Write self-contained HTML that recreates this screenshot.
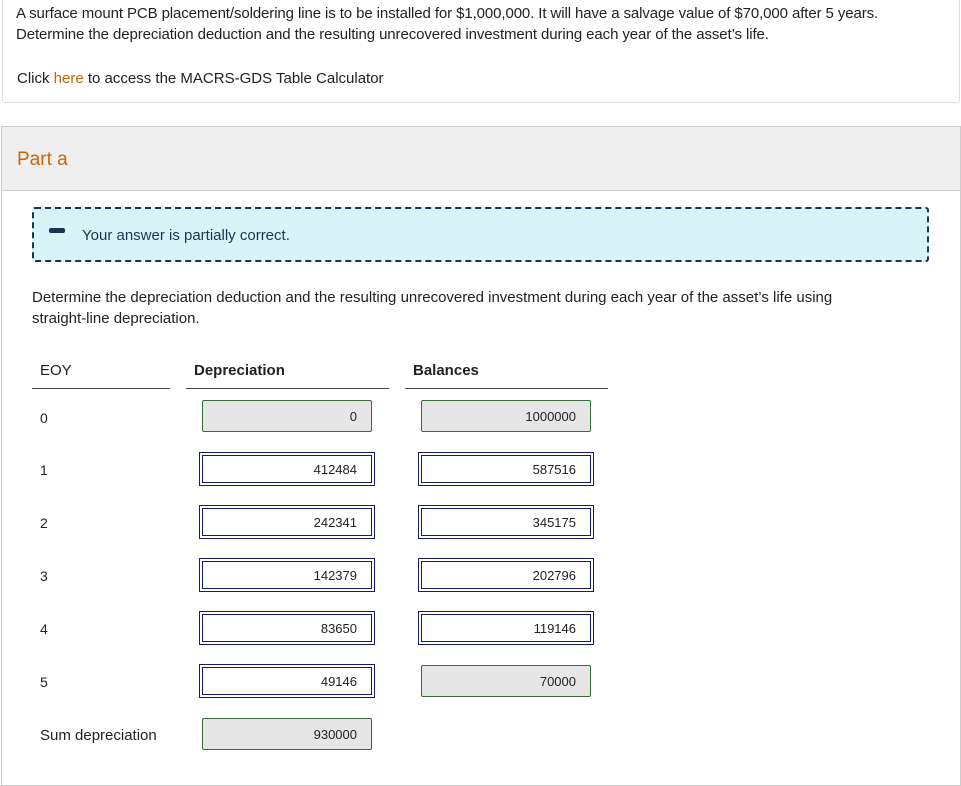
<!DOCTYPE html>
<html><head><style>
*{box-sizing:border-box;margin:0;padding:0}
body{width:961px;height:768px;background:#fff;font-family:"Liberation Sans",sans-serif;color:#222;position:relative;overflow:hidden}
.a{position:absolute}
.t{font-size:15px;line-height:21px}
.g{position:absolute;width:170px;height:32px;background:#e6e6e6;border:1px solid #3a6a3a;border-radius:2px;font-size:13px;text-align:right;padding-right:14px;line-height:32px}
.d{position:absolute;width:176px;height:34px;border:1px solid #1a1a6a;padding:2px}
.d div{border:1px solid #1a1a6a;height:100%;font-size:13px;text-align:right;padding-right:14px;line-height:28px}
.n{position:absolute;left:40px;font-size:14px}
</style></head><body>
<div class="a" style="left:2px;top:-2px;width:958px;height:105px;border:1px solid #ddd;border-top:none;border-radius:0 0 3px 3px"></div>
<div class="a t" style="left:16px;top:3px;width:910px;letter-spacing:-0.1px">A surface mount PCB placement/soldering line is to be installed for $1,000,000. It will have a salvage value of $70,000 after 5 years. Determine the depreciation deduction and the resulting unrecovered investment during each year of the asset’s life.</div>
<div class="a t" style="left:17px;top:68px">Click <span style="color:#c8650a">here</span> to access the MACRS-GDS Table Calculator</div>
<div class="a" style="left:1px;top:126px;width:960px;height:660px;border:1px solid #ccc"></div>
<div class="a" style="left:2px;top:127px;width:958px;height:64px;background:#efefef;border-bottom:1px solid #ccc"></div>
<div class="a" style="left:17px;top:149px;font-size:19px;color:#c8650a">Part a</div>
<div class="a" style="left:32px;top:207px;width:897px;height:55px;background:#d8f4f8;border:2px dashed #1a3550;border-radius:3px"></div>
<div class="a" style="left:49px;top:228px;width:16px;height:5px;background:#1a3550;border-radius:2px"></div>
<div class="a" style="left:82px;top:227px;font-size:15px;color:#1a3550">Your answer is partially correct.</div>
<div class="a t" style="left:32px;top:287px;width:845px">Determine the depreciation deduction and the resulting unrecovered investment during each year of the asset’s life using straight-line depreciation.</div>
<div class="a" style="left:40px;top:362px;font-size:15px">EOY</div>
<div class="a" style="left:194px;top:362px;font-size:15px;font-weight:bold">Depreciation</div>
<div class="a" style="left:413px;top:362px;font-size:15px;font-weight:bold">Balances</div>
<div class="a" style="left:32px;top:388px;width:138px;border-top:1px solid #444"></div>
<div class="a" style="left:186px;top:388px;width:203px;border-top:1px solid #444"></div>
<div class="a" style="left:405px;top:388px;width:203px;border-top:1px solid #444"></div>
<div class="n" style="top:410px">0</div>
<div class="n" style="top:462px">1</div>
<div class="n" style="top:515px">2</div>
<div class="n" style="top:568px">3</div>
<div class="n" style="top:621px">4</div>
<div class="n" style="top:674px">5</div>
<div class="n" style="top:727px;font-size:15px">Sum depreciation</div>
<div class="g" style="left:202px;top:400px">0</div>
<div class="g" style="left:421px;top:400px">1000000</div>
<div class="d" style="left:199px;top:452px"><div>412484</div></div>
<div class="d" style="left:418px;top:452px"><div>587516</div></div>
<div class="d" style="left:199px;top:505px"><div>242341</div></div>
<div class="d" style="left:418px;top:505px"><div>345175</div></div>
<div class="d" style="left:199px;top:558px"><div>142379</div></div>
<div class="d" style="left:418px;top:558px"><div>202796</div></div>
<div class="d" style="left:199px;top:611px"><div>83650</div></div>
<div class="d" style="left:418px;top:611px"><div>119146</div></div>
<div class="d" style="left:199px;top:664px"><div>49146</div></div>
<div class="g" style="left:421px;top:665px">70000</div>
<div class="g" style="left:202px;top:718px">930000</div>
</body></html>
